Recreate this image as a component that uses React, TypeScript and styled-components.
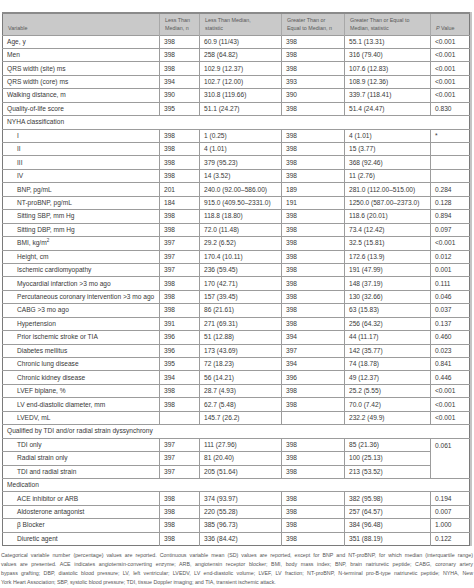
import React from 'react';
import styled, { createGlobalStyle } from 'styled-components';

const GlobalStyle = createGlobalStyle`
  html, body {
    margin: 0;
    padding: 0;
    background: #ffffff;
  }
  body {
    font-family: 'Liberation Sans Narrow', 'Liberation Sans', Arial, sans-serif;
    color: #333333;
  }
`;

type DataRow = {
  label: React.ReactNode;
  n1?: string;
  s1?: string;
  n2?: string;
  s2?: string;
  p?: string;
  indent?: boolean;
  pSpan?: number;
  skipP?: boolean;
};

type GroupRow = { group: string };

type Row = DataRow | GroupRow;

const rows: Row[] = [
  { label: 'Age, y', n1: '398', s1: '60.9 (11/43)', n2: '398', s2: '55.1 (13.31)', p: '<0.001' },
  { label: 'Men', n1: '398', s1: '258 (64.82)', n2: '398', s2: '316 (79.40)', p: '<0.001' },
  { label: 'QRS width (site) ms', n1: '398', s1: '102.9 (12.37)', n2: '398', s2: '107.6 (12.83)', p: '<0.001' },
  { label: 'QRS width (core) ms', n1: '394', s1: '102.7 (12.00)', n2: '393', s2: '108.9 (12.36)', p: '<0.001' },
  { label: 'Walking distance, m', n1: '390', s1: '310.8 (119.66)', n2: '390', s2: '339.7 (118.41)', p: '<0.001' },
  { label: 'Quality-of-life score', n1: '395', s1: '51.1 (24.27)', n2: '398', s2: '51.4 (24.47)', p: '0.830' },
  { group: 'NYHA classification' },
  { label: 'I', n1: '398', s1: '1 (0.25)', n2: '398', s2: '4 (1.01)', p: '*', indent: true },
  { label: 'II', n1: '398', s1: '4 (1.01)', n2: '398', s2: '15 (3.77)', p: '', indent: true },
  { label: 'III', n1: '398', s1: '379 (95.23)', n2: '398', s2: '368 (92.46)', p: '', indent: true },
  { label: 'IV', n1: '398', s1: '14 (3.52)', n2: '398', s2: '11 (2.76)', p: '', indent: true },
  { label: 'BNP, pg/mL', n1: '201', s1: '240.0 (92.00\u2013586.00)', n2: '189', s2: '281.0 (112.00\u2013515.00)', p: '0.284', indent: true },
  { label: 'NT-proBNP, pg/mL', n1: '184', s1: '915.0 (409.50\u20132331.0)', n2: '191', s2: '1250.0 (587.00\u20132373.0)', p: '0.128', indent: true },
  { label: 'Sitting SBP, mm Hg', n1: '398', s1: '118.8 (18.80)', n2: '398', s2: '118.6 (20.01)', p: '0.894', indent: true },
  { label: 'Sitting DBP, mm Hg', n1: '398', s1: '72.0 (11.48)', n2: '398', s2: '73.4 (12.42)', p: '0.097', indent: true },
  {
    label: (
      <>
        BMI, kg/m<sup>2</sup>
      </>
    ),
    n1: '397', s1: '29.2 (6.52)', n2: '398', s2: '32.5 (15.81)', p: '<0.001', indent: true,
  },
  { label: 'Height, cm', n1: '397', s1: '170.4 (10.11)', n2: '398', s2: '172.6 (13.9)', p: '0.012', indent: true },
  { label: 'Ischemic cardiomyopathy', n1: '397', s1: '236 (59.45)', n2: '398', s2: '191 (47.99)', p: '0.001', indent: true },
  { label: 'Myocardial infarction >3 mo ago', n1: '398', s1: '170 (42.71)', n2: '398', s2: '148 (37.19)', p: '0.111', indent: true },
  { label: 'Percutaneous coronary intervention >3 mo ago', n1: '398', s1: '157 (39.45)', n2: '398', s2: '130 (32.66)', p: '0.046', indent: true },
  { label: 'CABG >3 mo ago', n1: '398', s1: '86 (21.61)', n2: '398', s2: '63 (15.83)', p: '0.037', indent: true },
  { label: 'Hypertension', n1: '391', s1: '271 (69.31)', n2: '398', s2: '256 (64.32)', p: '0.137', indent: true },
  { label: 'Prior ischemic stroke or TIA', n1: '396', s1: '51 (12.88)', n2: '394', s2: '44 (11.17)', p: '0.460', indent: true },
  { label: 'Diabetes mellitus', n1: '396', s1: '173 (43.69)', n2: '397', s2: '142 (35.77)', p: '0.023', indent: true },
  { label: 'Chronic lung disease', n1: '395', s1: '72 (18.23)', n2: '394', s2: '74 (18.78)', p: '0.841', indent: true },
  { label: 'Chronic kidney disease', n1: '394', s1: '56 (14.21)', n2: '396', s2: '49 (12.37)', p: '0.446', indent: true },
  { label: 'LVEF biplane, %', n1: '398', s1: '28.7 (4.93)', n2: '398', s2: '25.2 (5.55)', p: '<0.001', indent: true },
  { label: 'LV end-diastolic diameter, mm', n1: '398', s1: '62.7 (5.48)', n2: '398', s2: '70.0 (7.42)', p: '<0.001', indent: true },
  { label: 'LVEDV, mL', n1: '', s1: '145.7 (26.2)', n2: '', s2: '232.2 (49.9)', p: '<0.001', indent: true },
  { group: 'Qualified by TDI and/or radial strain dyssynchrony' },
  { label: 'TDI only', n1: '397', s1: '111 (27.96)', n2: '398', s2: '85 (21.36)', p: '0.061', pSpan: 3, indent: true },
  { label: 'Radial strain only', n1: '397', s1: '81 (20.40)', n2: '398', s2: '100 (25.13)', skipP: true, indent: true },
  { label: 'TDI and radial strain', n1: '397', s1: '205 (51.64)', n2: '398', s2: '213 (53.52)', skipP: true, indent: true },
  { group: 'Medication' },
  { label: 'ACE inhibitor or ARB', n1: '398', s1: '374 (93.97)', n2: '398', s2: '382 (95.98)', p: '0.194', indent: true },
  { label: 'Aldosterone antagonist', n1: '398', s1: '220 (55.28)', n2: '398', s2: '257 (64.57)', p: '0.007', indent: true },
  { label: '\u03b2 Blocker', n1: '398', s1: '385 (96.73)', n2: '398', s2: '384 (96.48)', p: '1.000', indent: true },
  { label: 'Diuretic agent', n1: '398', s1: '336 (84.42)', n2: '398', s2: '351 (88.19)', p: '0.122', indent: true },
];

const footLines = [
  'Categorical variable number (percentage) values are reported. Continuous variable mean (SD) values are reported, except for BNP and NT-proBNP, for which median (interquartile range)',
  'values are presented. ACE indicates angiotensin-converting enzyme; ARB, angiotensin receptor blocker; BMI, body mass index; BNP, brain natriuretic peptide; CABG, coronary artery',
  'bypass grafting; DBP, diastolic blood pressure; LV, left ventricular; LVEDV, LV end-diastolic volume; LVEF, LV fraction; NT-proBNP, N-terminal pro-B-type natriuretic peptide; NYHA, New',
  'York Heart Association; SBP, systolic blood pressure; TDI, tissue Doppler imaging; and TIA, transient ischemic attack.',
];

const Page = styled.div`
  width: 474px;
  height: 588px;
  overflow: hidden;
  padding-top: 12px;
  box-sizing: border-box;
`;

const Table = styled.table`
  margin-left: 2px;
  width: 467px;
  border-collapse: collapse;
  table-layout: fixed;
  border: 1px solid #7a7a7a;
  box-shadow: 2px 0 0 #c4c4c4;
`;

const HeadRow = styled.tr`
  height: 22px;
  background: #c9c9c9;
  border-top: 2px solid #8a8a8a;
`;

const HeadCell = styled.th`
  font-weight: normal;
  font-size: 5.4px;
  line-height: 8.5px;
  color: #5a5a5a;
  text-align: left;
  vertical-align: bottom;
  padding: 0 4px 2px 5px;
  border-left: 1px solid #a8a8a8;

  &:first-child {
    border-left: none;
  }

  i {
    font-style: italic;
  }
`;

const BodyRow = styled.tr`
  height: 13.45px;
  border-top: 1px solid #9c9c9c;
`;

const Cell = styled.td<{ $indent?: boolean; $top?: boolean }>`
  font-size: 6.6px;
  line-height: 8px;
  color: #383838;
  white-space: nowrap;
  padding: 0 0 0 ${({ $indent }) => ($indent ? '14px' : '4px')};
  vertical-align: ${({ $top }) => ($top ? 'top' : 'middle')};
  padding-top: ${({ $top }) => ($top ? '3px' : '0')};
  border-left: 1px solid #9c9c9c;

  &:first-child {
    border-left: none;
  }

  sup {
    font-size: 4.5px;
    line-height: 0;
  }
`;

const GroupCell = styled.td`
  font-size: 6.6px;
  line-height: 8px;
  color: #383838;
  padding: 0 0 0 4px;
`;

const Footnote = styled.div`
  margin: 5px 1px 0 1px;
  font-size: 5.3px;
  line-height: 9px;
  color: #555555;
`;

const FootLine = styled.div<{ $last?: boolean }>`
  white-space: nowrap;
  text-align: justify;
  text-align-last: ${({ $last }) => ($last ? 'left' : 'justify')};
  white-space: ${({ $last }) => ($last ? 'nowrap' : 'normal')};
`;

const isGroup = (r: Row): r is GroupRow => 'group' in r;

const App = () => {
  return (
    <Page>
      <GlobalStyle />
      <Table>
        <colgroup>
          <col style={{ width: 157 }} />
          <col style={{ width: 40 }} />
          <col style={{ width: 82 }} />
          <col style={{ width: 63 }} />
          <col style={{ width: 86 }} />
          <col style={{ width: 39 }} />
        </colgroup>
        <thead>
          <HeadRow>
            <HeadCell>Variable</HeadCell>
            <HeadCell>
              Less Than
              <br />
              Median, n
            </HeadCell>
            <HeadCell>
              Less Than Median,
              <br />
              statistic
            </HeadCell>
            <HeadCell>
              Greater Than or
              <br />
              Equal to Median, n
            </HeadCell>
            <HeadCell>
              Greater Than or Equal to
              <br />
              Median, statistic
            </HeadCell>
            <HeadCell>
              <i>P</i> Value
            </HeadCell>
          </HeadRow>
        </thead>
        <tbody>
          {rows.map((r, i) =>
            isGroup(r) ? (
              <BodyRow key={i}>
                <GroupCell colSpan={6}>{r.group}</GroupCell>
              </BodyRow>
            ) : (
              <BodyRow key={i}>
                <Cell $indent={r.indent}>{r.label}</Cell>
                <Cell>{r.n1}</Cell>
                <Cell>{r.s1}</Cell>
                <Cell>{r.n2}</Cell>
                <Cell>{r.s2}</Cell>
                {!r.skipP && (
                  <Cell rowSpan={r.pSpan} $top={!!r.pSpan}>
                    {r.p}
                  </Cell>
                )}
              </BodyRow>
            )
          )}
        </tbody>
      </Table>
      <Footnote>
        {footLines.map((line, i) => (
          <FootLine key={i} $last={i === footLines.length - 1}>
            {line}
          </FootLine>
        ))}
      </Footnote>
    </Page>
  );
};

export default App;
